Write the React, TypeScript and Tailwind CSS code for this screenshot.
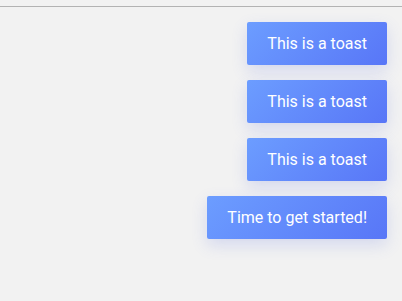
import React from "react";

const toasts = ["This is a toast", "This is a toast", "This is a toast", "Time to get started!"];

export default function App() {
  return (
    <div className="w-[402px] h-[301px] bg-[#f2f2f2] overflow-hidden" style={{ fontFamily: "Roboto, 'Liberation Sans', sans-serif" }}>
      <div className="h-[6px]" />
      <div className="border-t border-[#b3b3b3]" />
      <div className="flex flex-col items-end gap-[15px] pt-[15px] pr-[15px]">
        {toasts.map((t, i) => (
          <div
            key={i}
            className="h-[43px] px-[20px] flex items-center rounded-[2px] bg-[linear-gradient(135deg,#6c9dff,#5876f7)] text-white text-[16px] shadow-[0_6px_16px_rgba(80,100,220,0.18)]"
          >
            {t}
          </div>
        ))}
      </div>
    </div>
  );
}
